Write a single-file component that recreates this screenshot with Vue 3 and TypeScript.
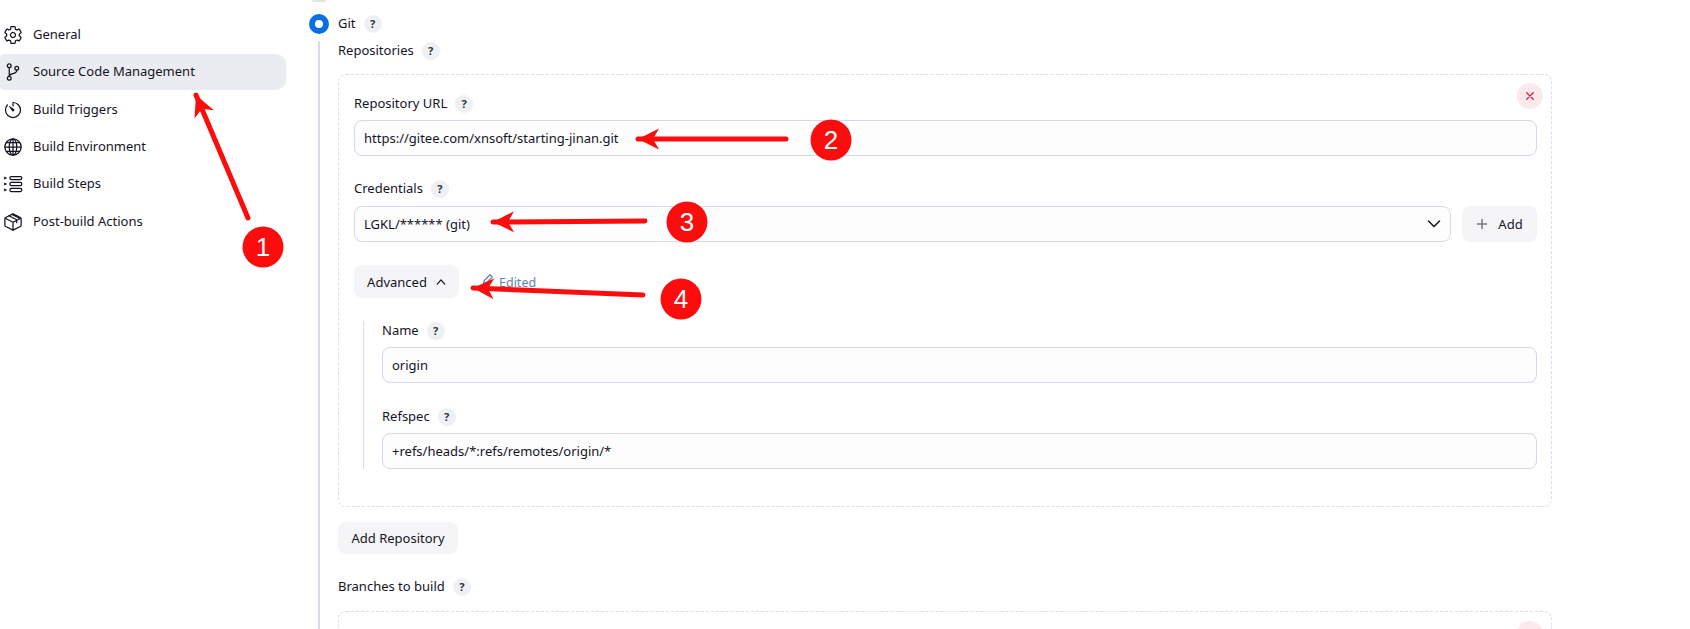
<script setup lang="ts">
interface Callout {
  label: string
  tail: [number, number]
  tip: [number, number]
  center: [number, number]
}

const navItems = [
  { name: 'General', icon: 'gear' },
  { name: 'Source Code Management', icon: 'branch', active: true },
  { name: 'Build Triggers', icon: 'timer' },
  { name: 'Build Environment', icon: 'globe' },
  { name: 'Build Steps', icon: 'steps' },
  { name: 'Post-build Actions', icon: 'box' },
]

const callouts: Callout[] = [
  { label: '1', tail: [248, 218], tip: [196, 95], center: [263, 247] },
  { label: '2', tail: [786, 139], tip: [638, 139], center: [831, 140] },
  { label: '3', tail: [645, 221], tip: [493, 222], center: [687, 222] },
  { label: '4', tail: [643, 295], tip: [473, 288], center: [681, 299] },
]

// swallowtail head, built back from the tip along the shaft
const headPoints = (c: Callout) => {
  const [tx, ty] = c.tip
  const dx = c.tail[0] - tx
  const dy = c.tail[1] - ty
  const len = Math.hypot(dx, dy)
  const ux = dx / len
  const uy = dy / len
  const at = (back: number, side: number) =>
    `${tx + ux * back - uy * side},${ty + uy * back + ux * side}`
  return [at(0, 0), at(21, 10.5), at(15, 0), at(21, -10.5)].join(' ')
}
</script>

<template>
  <div class="page">
    <aside class="sidebar">
      <a v-for="item in navItems" :key="item.name" class="nav-item" :class="{ active: item.active }">
        <svg class="nav-icon" viewBox="0 0 512 512">
          <path
            v-if="item.icon === 'gear'"
            fill="none"
            stroke="currentColor"
            stroke-width="32"
            stroke-linecap="round"
            stroke-linejoin="round"
            d="M262.29 192.31a64 64 0 1057.4 57.4 64.13 64.13 0 00-57.4-57.4zM416.39 256a154.34 154.34 0 01-1.53 20.79l45.21 35.46a10.81 10.81 0 012.45 13.75l-42.77 74a10.81 10.81 0 01-13.14 4.59l-44.9-18.08a16.11 16.11 0 00-15.17 1.75A164.48 164.48 0 01325 400.8a15.94 15.94 0 00-8.82 12.14l-6.73 47.89a11.08 11.08 0 01-10.68 9.17h-85.54a11.11 11.11 0 01-10.69-8.87l-6.72-47.82a16.07 16.07 0 00-9-12.22 155.3 155.3 0 01-21.46-12.57 16 16 0 00-15.11-1.71l-44.89 18.07a10.81 10.81 0 01-13.14-4.58l-42.77-74a10.8 10.8 0 012.45-13.75l38.21-30a16.05 16.05 0 006-14.08c-.36-4.17-.58-8.33-.58-12.5s.21-8.27.58-12.35a16 16 0 00-6.07-13.94l-38.19-30A10.81 10.81 0 0149.48 186l42.77-74a10.81 10.81 0 0113.14-4.59l44.9 18.08a16.11 16.11 0 0015.17-1.75A164.48 164.48 0 01187 111.2a15.94 15.94 0 008.82-12.14l6.73-47.89A11.08 11.08 0 01213.23 42h85.54a11.11 11.11 0 0110.69 8.87l6.72 47.82a16.07 16.07 0 009 12.22 155.3 155.3 0 0121.46 12.57 16 16 0 0015.11 1.71l44.89-18.07a10.81 10.81 0 0113.14 4.58l42.77 74a10.8 10.8 0 01-2.45 13.75l-38.21 30a16.05 16.05 0 00-6.05 14.08c.33 4.14.55 8.3.55 12.47z"
          />
          <g v-else-if="item.icon === 'branch'" fill="none" stroke="currentColor" stroke-width="32" stroke-linecap="round">
            <circle cx="160" cy="96" r="48" />
            <circle cx="160" cy="416" r="48" />
            <circle cx="352" cy="160" r="48" />
            <path d="M160 144v224M352 208c0 128-192 48-192 160" />
          </g>
          <g v-else-if="item.icon === 'timer'">
            <path fill="none" stroke="currentColor" stroke-width="32" stroke-linecap="round" stroke-linejoin="round" d="M112.91 128A191.85 191.85 0 0064 254c-1.18 106.35 85.65 193.8 192 194 106.2.2 192-85.83 192-192 0-104.54-83.55-189.61-187.5-192a4.36 4.36 0 00-4.5 4.37V152" />
            <path fill="currentColor" d="M233.38 278.63l-79-113a8.13 8.13 0 0111.32-11.32l113 79a32.5 32.5 0 01-37.25 53.26 33.21 33.21 0 01-8.07-7.94z" />
          </g>
          <g v-else-if="item.icon === 'globe'" fill="none" stroke="currentColor" stroke-width="32" stroke-linecap="round">
            <circle cx="256" cy="256" r="208" />
            <ellipse cx="256" cy="256" rx="96" ry="208" />
            <path d="M256 48v416M48 256h416M84 144h344M84 368h344" />
          </g>
          <g v-else-if="item.icon === 'steps'" fill="none" stroke="currentColor" stroke-linejoin="round">
            <g stroke-width="32">
              <rect x="176" y="64" width="304" height="80" rx="36" />
              <rect x="176" y="216" width="304" height="80" rx="36" />
              <rect x="176" y="368" width="304" height="80" rx="36" />
            </g>
            <path stroke-width="24" d="M36 80l52 24-52 24zM36 232l52 24-52 24zM36 384l52 24-52 24z" />
          </g>
          <g v-else fill="none" stroke="currentColor" stroke-width="32" stroke-linejoin="round" stroke-linecap="round">
            <path d="M256 48l176 88c16 8 32 20 32 40v160c0 20-16 32-32 40l-176 88-176-88c-16-8-32-20-32-40V176c0-20 16-32 32-40z" />
            <path d="M56 160l200 104 200-104M256 264v200M152 96l200 104v72M232 60l200 104" />
          </g>
        </svg>
        <span class="nav-text">{{ item.name }}</span>
      </a>
    </aside>

    <main class="content">
      <div class="radio-prev"></div>
      <div class="radio-row">
        <span class="radio"></span>
        <span class="label">Git</span>
        <span class="help">?</span>
      </div>

      <div class="nested">
        <div class="label-row">
          <span class="label">Repositories</span>
          <span class="help">?</span>
        </div>

        <section class="card repo-card">
          <button class="remove" type="button">
            <svg viewBox="0 0 12 12" width="10" height="10">
              <path d="M2 2l8 8M10 2l-8 8" stroke="#e6254f" stroke-width="1.6" stroke-linecap="round" />
            </svg>
          </button>

          <div class="label-row">
            <span class="label">Repository URL</span>
            <span class="help">?</span>
          </div>
          <div class="field">https://gitee.com/xnsoft/starting-jinan.git</div>

          <div class="label-row spaced">
            <span class="label">Credentials</span>
            <span class="help">?</span>
          </div>
          <div class="cred-row">
            <div class="field select">
              <span>LGKL/****** (git)</span>
              <svg viewBox="0 0 14 14" width="14" height="14">
                <path d="M1.5 4l5.5 5.5L12.5 4" fill="none" stroke="#14141f" stroke-width="1.5" stroke-linecap="round" stroke-linejoin="round" />
              </svg>
            </div>
            <button class="btn add-btn" type="button">
              <svg viewBox="0 0 12 12" width="12" height="12">
                <path d="M6 1v10M1 6h10" stroke="#77777f" stroke-width="1.5" />
              </svg>
              Add
            </button>
          </div>

          <div class="advanced-row">
            <button class="btn advanced-btn" type="button">
              Advanced
              <svg viewBox="0 0 12 12" width="10" height="10">
                <path d="M1.5 8.5L6 3.5l4.5 5" fill="none" stroke="#14141f" stroke-width="1.5" stroke-linecap="round" stroke-linejoin="round" />
              </svg>
            </button>
            <span class="edited">
              <svg viewBox="0 0 12 12" width="12" height="12">
                <path d="M1.5 10.5l.8-3L8 1.8l2.2 2.2-5.7 5.7z" fill="none" stroke="#6681a8" stroke-width="1.3" stroke-linejoin="round" />
              </svg>
              Edited
            </span>
          </div>

          <div class="advanced-body">
            <div class="label-row">
              <span class="label">Name</span>
              <span class="help">?</span>
            </div>
            <div class="field">origin</div>
            <div class="label-row spaced-lg">
              <span class="label">Refspec</span>
              <span class="help">?</span>
            </div>
            <div class="field">+refs/heads/*:refs/remotes/origin/*</div>
          </div>
        </section>

        <button class="btn add-repo" type="button">Add Repository</button>

        <div class="label-row branches">
          <span class="label">Branches to build</span>
          <span class="help">?</span>
        </div>
        <section class="card branch-card">
          <button class="remove" type="button"></button>
        </section>
      </div>
    </main>

    <svg class="callouts" viewBox="0 0 1690 629" width="1690" height="629">
      <g v-for="c in callouts" :key="c.label">
        <line :x1="c.tail[0]" :y1="c.tail[1]" :x2="c.tip[0]" :y2="c.tip[1]" stroke="#fc0d0d" stroke-width="5" stroke-linecap="round" />
        <polygon :points="headPoints(c)" fill="#fc0d0d" />
        <circle :cx="c.center[0]" :cy="c.center[1]" r="20.5" fill="#fc0d0d" />
        <text :x="c.center[0]" :y="c.center[1] + 9" class="callout-num" text-anchor="middle">{{ c.label }}</text>
      </g>
    </svg>
  </div>
</template>

<style>
html,
body {
  margin: 0;
  background: #fff;
  overflow: hidden;
}
</style>

<style scoped>
.page {
  position: relative;
  display: flex;
  width: 1690px;
  height: 629px;
  overflow: hidden;
  font-family: "Noto Sans", sans-serif;
  font-size: 13px;
  line-height: 20px;
  color: #14141f;
}

.sidebar {
  flex: none;
  width: 290px;
  margin-left: -4px;
  padding-top: 17px;
  display: flex;
  flex-direction: column;
  gap: 1.33px;
  box-sizing: border-box;
}

.nav-item {
  display: flex;
  align-items: center;
  height: 36px;
  padding-left: 7px;
  gap: 10px;
  border-radius: 10px;
  color: #14141f;
}

.nav-item.active {
  background: #ebecf2;
}

.nav-icon {
  flex: none;
  width: 20px;
  height: 20px;
}

.nav-text,
.label {
  padding-bottom: 2px;
}

.content {
  flex: none;
  width: 1243px;
  margin-left: 23px;
  display: flex;
  flex-direction: column;
}

.radio-prev {
  flex: none;
  height: 2px;
  width: 14px;
  margin-left: 3px;
  border-radius: 0 0 7px 7px;
  background: #dfe3ec;
}

.radio-row {
  flex: none;
  display: flex;
  align-items: center;
  height: 20px;
  margin-top: 12px;
}

.radio {
  box-sizing: border-box;
  width: 20px;
  height: 20px;
  margin-right: 9px;
  border: 6px solid #0b6fe4;
  border-radius: 50%;
  background: #fff;
}

.nested {
  flex: 1;
  margin: 7px 0 0 9px;
  padding-left: 18px;
  border-left: 2px solid #d6dcea;
}

.label-row {
  display: flex;
  align-items: center;
  height: 20px;
}

.help {
  width: 18px;
  height: 18px;
  margin-left: 8px;
  border-radius: 50%;
  background: #eef0f4;
  color: #30303a;
  font-size: 11px;
  font-weight: 700;
  line-height: 18px;
  text-align: center;
}

.card {
  position: relative;
  box-sizing: border-box;
  border: 1px dashed #d9deea;
  border-radius: 8px;
}

.repo-card {
  height: 433px;
  margin-top: 13px;
  padding: 19px 14px 0 15px;
}

.branch-card {
  height: 60px;
  margin-top: 14px;
}

.remove {
  position: absolute;
  top: 8px;
  right: 8px;
  display: flex;
  align-items: center;
  justify-content: center;
  width: 26px;
  height: 26px;
  padding: 0;
  border: none;
  border-radius: 50%;
  background: #fbe9ec;
}

.branch-card .remove {
  top: 9px;
}

.field {
  box-sizing: border-box;
  height: 36px;
  margin-top: 6px;
  padding: 0 9px;
  display: flex;
  align-items: center;
  border: 1px solid #d3d9e8;
  border-radius: 8px;
  background: #fdfdfe;
}

.spaced {
  margin-top: 23px;
}

.spaced-lg {
  margin-top: 24px;
}

.cred-row {
  display: flex;
  gap: 11px;
  margin-top: 7px;
}

.cred-row .field {
  margin-top: 0;
}

.select {
  flex: 1;
  justify-content: space-between;
  padding-right: 9px;
}

.btn {
  display: inline-flex;
  align-items: center;
  justify-content: center;
  padding: 0;
  border: none;
  border-radius: 8px;
  background: #f5f5f8;
  color: #14141f;
  font: inherit;
}

.add-btn {
  width: 75px;
  height: 36px;
  gap: 10px;
}

.advanced-row {
  display: flex;
  align-items: center;
  margin-top: 23px;
}

.advanced-btn {
  width: 105px;
  height: 33px;
  gap: 9px;
}

.edited {
  display: inline-flex;
  align-items: center;
  gap: 5px;
  margin: 2px 0 0 23px;
  color: #6681a8;
  font-size: 12.5px;
}

.edited svg {
  margin-top: -8px;
}

.advanced-body {
  margin: 23px 0 0 9px;
  padding-left: 18px;
  border-left: 1px solid #d6dcea;
}

.add-repo {
  display: flex;
  width: 120px;
  height: 32px;
  margin-top: 15px;
}

.branches {
  margin-top: 23px;
}

.callouts {
  position: absolute;
  top: 0;
  left: 0;
  pointer-events: none;
}

.callout-num {
  fill: #fff;
  font-family: "Liberation Sans", sans-serif;
  font-size: 26px;
}
</style>
